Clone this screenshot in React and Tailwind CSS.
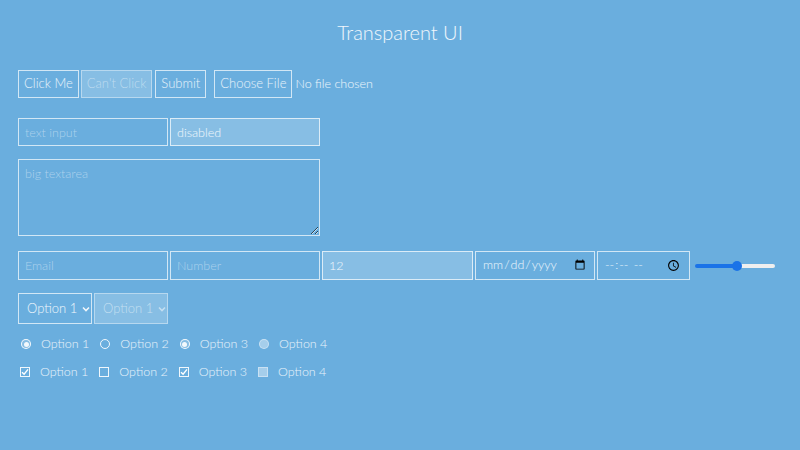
import React from 'react'

const field =
  "h-[28px] border border-white/70 bg-transparent px-[6px] text-[12.5px] font-light text-white/90 placeholder-white/45 outline-none"

const Radio = ({ checked, disabled, label }) => (
  <label className="flex items-center mr-[11px]">
    <span
      className={`w-[10px] h-[10px] rounded-full border flex items-center justify-center ${
        disabled ? "border-white/40 bg-white/40" : "border-white/90"
      } ${checked ? "bg-white/20" : ""}`}
    >
      {checked && <span className="w-[5px] h-[5px] rounded-full bg-white/90" />}
    </span>
    <span className="ml-[10px] text-[12.5px] text-white/85">{label}</span>
  </label>
)

const Check = ({ checked, disabled, label }) => (
  <label className="flex items-center mr-[11px]">
    <span
      className={`w-[10px] h-[10px] border flex items-center justify-center ${
        disabled ? "border-white/40 bg-white/40" : "border-white/90"
      }`}
    >
      {checked && (
        <svg width="8" height="8" viewBox="0 0 8 8">
          <path d="M1 4.2 L3.1 6.3 L7 1.4" stroke="white" strokeWidth="1.4" fill="none" />
        </svg>
      )}
    </span>
    <span className="ml-[10px] text-[12.5px] text-white/85">{label}</span>
  </label>
)

const Chevron = ({ dim }) => (
  <svg
    width="8"
    height="6"
    viewBox="0 0 8 6"
    className={`absolute right-[2px] top-[13px] pointer-events-none ${dim ? "opacity-50" : "opacity-90"}`}
  >
    <path d="M1 1.5 L4 4.5 L7 1.5" stroke="white" strokeWidth="1.6" fill="none" />
  </svg>
)

export default function App() {
  return (
    <div
      className="w-full min-h-screen bg-[#6aaede] px-[18px] font-light text-white"
      style={{ fontFamily: "Lato, 'Open Sans', sans-serif" }}
    >
      {/* Title */}
      <h1 className="pt-[19px] text-center text-[20px] font-light text-white/90 leading-[26px]">
        Transparent UI
      </h1>

      {/* Buttons */}
      <div className="mt-[25px] flex items-center h-[28px]">
        <button className="h-[28px] px-[5px] border border-white/70 text-[13px] text-white/85">
          Click Me
        </button>
        <button
          disabled
          className="ml-[2px] h-[28px] px-[5px] border border-white/40 bg-white/20 text-[13px] text-white/45"
        >
          Can't Click
        </button>
        <button className="ml-[3px] h-[28px] px-[5px] border border-white/70 text-[13px] text-white/85">
          Submit
        </button>
        <input
          type="file"
          className="ml-[8px] text-[12.5px] text-white/90 file:h-[28px] file:px-[5px] file:mr-[3px] file:border file:border-white/70 file:bg-transparent file:text-white/85 file:text-[13px] file:font-light"
        />
      </div>

      {/* Text inputs */}
      <div className="mt-[20px] flex gap-[2px]">
        <input className={`${field} w-[150px]`} placeholder="text input" />
        <input className={`${field} w-[150px] bg-white/20 border-white/40 text-white/50`} disabled value="disabled" />
      </div>

      <textarea
        className="mt-[13px] block w-[302px] h-[77px] border border-white/70 bg-transparent px-[6px] py-[5px] text-[12.5px] font-light text-white/90 placeholder-white/45 outline-none"
        placeholder="big textarea"
      />

      {/* Row of misc inputs */}
      <div className="mt-[15px] flex items-center gap-[2px]">
        <input type="email" className={`${field} w-[150px] h-[29px]`} placeholder="Email" />
        <input type="number" className={`${field} w-[150px] h-[29px]`} placeholder="Number" />
        <input
          type="number"
          disabled
          value="12"
          className={`${field} w-[151px] h-[29px] bg-white/20 border-white/40 text-white/50`}
        />
        <input type="date" className={`${field} w-[120px] h-[29px] text-white/80`} />
        <input type="time" className={`${field} w-[93px] h-[29px] text-white/40`} />
        {/* slider */}
        <div className="ml-[3px] w-[80px] h-[12px] flex items-center relative">
          <div className="h-[4px] w-[42px] rounded-l-full bg-[#1a73e8]" />
          <div className="h-[4px] flex-1 rounded-r-full bg-[#efefef]" />
          <div className="absolute left-[37px] top-[1px] w-[10px] h-[10px] rounded-full bg-[#1a73e8]" />
        </div>
      </div>

      {/* Selects */}
      <div className="mt-[13px] flex gap-[2px]">
        <div className="relative">
          <select className="appearance-none h-[31px] w-[74px] border border-white/70 bg-transparent pl-[8px] text-[13px] font-light text-white/90 outline-none">
            <option>Option 1</option>
            <option>Option 2</option>
          </select>
          <Chevron />
        </div>
        <div className="relative">
          <select
            disabled
            className="appearance-none h-[31px] w-[74px] border border-white/40 bg-white/20 pl-[8px] text-[13px] font-light text-white/50 outline-none"
          >
            <option>Option 1</option>
          </select>
          <Chevron dim />
        </div>
      </div>

      {/* Radios */}
      <div className="mt-[12px] flex items-center h-[16px] pl-[3px]">
        <Radio checked label="Option 1" />
        <Radio label="Option 2" />
        <Radio checked label="Option 3" />
        <Radio disabled label="Option 4" />
      </div>

      {/* Checkboxes */}
      <div className="mt-[12px] flex items-center h-[16px] pl-[2px]">
        <Check checked label="Option 1" />
        <Check label="Option 2" />
        <Check checked label="Option 3" />
        <Check disabled label="Option 4" />
      </div>
    </div>
  )
}
